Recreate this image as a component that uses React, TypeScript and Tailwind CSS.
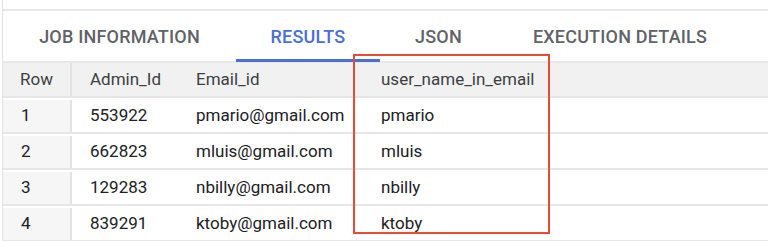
import React from 'react';

const tabs = [
  { label: 'JOB INFORMATION', w: 'w-[233px]', active: false },
  { label: 'RESULTS', w: 'w-[144px]', active: true },
  { label: 'JSON', w: 'w-[117px]', active: false },
  { label: 'EXECUTION DETAILS', w: 'w-[246px]', active: false },
];

const rows = [
  { n: 1, id: '553922', email: 'pmario@gmail.com', user: 'pmario' },
  { n: 2, id: '662823', email: 'mluis@gmail.com', user: 'mluis' },
  { n: 3, id: '129283', email: 'nbilly@gmail.com', user: 'nbilly' },
  { n: 4, id: '839291', email: 'ktoby@gmail.com', user: 'ktoby' },
];

export default function App() {
  return (
    <div className="relative w-[768px] h-[241px] overflow-hidden bg-white font-['Roboto',sans-serif]">
      <div className="h-[9px] border-l border-[#e3e3e3] ml-[2px]" />
      <div className="ml-[2px] border-l border-[#e3e3e3]">
        {/* tabs */}
        <div className="flex h-[54px] border-t-2 border-b-2 border-[#e8e8e8]">
          {tabs.map((t) => (
            <div
              key={t.label}
              className={`${t.w} flex items-center justify-center relative pt-[1px] text-[18px] font-medium tracking-[0.2px] ${
                t.active ? 'text-[#4a6fd6]' : 'text-[#5f6368]'
              }`}
            >
              {t.label}
              {t.active && <div className="absolute left-0 right-0 bottom-[-1px] h-[3px] bg-[#4a6fd6]" />}
            </div>
          ))}
        </div>

        {/* table */}
        <div className="text-[17px]">
          <div className="flex h-[35px] items-center bg-[#f1f1f1] border-b-2 border-[#e6e6e6] text-[#3c4043]">
            <div className="w-[69px] h-full flex items-center pl-[17px] border-r-2 border-[#e3e3e3]">Row</div>
            <div className="w-[106px] pl-[18px]">Admin_Id</div>
            <div className="w-[185px] pl-[18px]">Email_id</div>
            <div className="pl-[18px]">user_name_in_email</div>
          </div>
          {rows.map((r) => (
            <div key={r.n} className="flex h-[36px] items-center pt-[2px] border-b-2 border-[#e6e6e6] text-[#202124]">
              <div className="w-[69px] h-full flex items-center pl-[18px] bg-[#f6f6f6] border-r-2 border-[#e3e3e3]">{r.n}</div>
              <div className="w-[106px] pl-[18px]">{r.id}</div>
              <div className="w-[185px] pl-[18px]">{r.email}</div>
              <div className="pl-[18px]">{r.user}</div>
            </div>
          ))}
        </div>
      </div>

      {/* red highlight */}
      <div className="absolute left-[353px] top-[54px] w-[197px] h-[180px] border-2 border-[#ea4a33]" />
    </div>
  );
}
